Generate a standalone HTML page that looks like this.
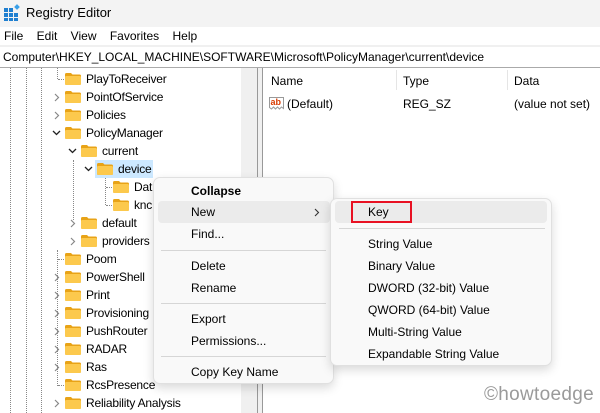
<!DOCTYPE html>
<html><head><meta charset="utf-8"><style>
*{margin:0;padding:0;box-sizing:border-box}
body{width:600px;height:413px;overflow:hidden;background:#fff;font-family:"Liberation Sans",sans-serif;font-size:12px;color:#000;position:relative}
.a{position:absolute;white-space:nowrap}
.t{position:absolute;white-space:nowrap;line-height:18px;height:18px;letter-spacing:-0.2px}
.f{position:absolute;width:16px;height:12px}
.dv{position:absolute;width:0;border-left:1px dotted #888}
.dh{position:absolute;height:0;border-top:1px dotted #888}
.mi{position:absolute;left:37px;line-height:22px;height:22px;font-size:12px}
.sep{position:absolute;height:1px;background:#d6d6d6}
</style></head><body>
<div class="a" style="left:0;top:0;width:600px;height:27px;background:#f3f3f3"></div>
<svg class="a" style="left:4px;top:4px" width="17" height="17" viewBox="0 0 17 17">
<g fill="#1f7fd0"><rect x="0" y="4" width="4" height="4"/><rect x="5" y="4" width="4" height="4"/><rect x="0" y="9" width="4" height="4"/><rect x="5" y="9" width="4" height="4"/><rect x="10" y="9" width="4" height="4"/><rect x="0" y="14" width="4" height="3"/><rect x="5" y="14" width="4" height="3"/><rect x="10" y="14" width="4" height="3"/></g>
<rect x="11" y="1" width="4" height="4" fill="#3aa0e8" transform="rotate(45 13 3)"/></svg>
<div class="a" style="left:26px;top:5px;font-size:13px">Registry Editor</div>
<div class="a" style="left:0;top:27px;width:600px;height:18px;background:#fff"></div>
<div class="a" style="left:4px;top:29px;font-size:12px">File&nbsp;&nbsp;&nbsp;&nbsp;Edit&nbsp;&nbsp;&nbsp;&nbsp;View&nbsp;&nbsp;&nbsp;&nbsp;Favorites&nbsp;&nbsp;&nbsp;&nbsp;Help</div>
<div class="a" style="left:0;top:45px;width:600px;height:2px;background:#f0f0f0"></div>
<div class="a" style="left:3px;top:50px;font-size:12px">Computer\HKEY_LOCAL_MACHINE\SOFTWARE\Microsoft\PolicyManager\current\device</div>
<div class="a" style="left:0;top:67px;width:600px;height:1px;background:#aaa"></div>
<div class="a" style="left:241px;top:68px;width:16px;height:345px;background:#f0f0f0"></div>
<div class="a" style="left:257px;top:68px;width:1px;height:345px;background:#999"></div>
<div class="a" style="left:258px;top:68px;width:4px;height:345px;background:#f0f0f0"></div>
<div class="a" style="left:262px;top:68px;width:1px;height:345px;background:#999"></div>
<div class="dv" style="left:10px;top:68px;height:345px"></div>
<div class="dv" style="left:26px;top:68px;height:345px"></div>
<div class="dv" style="left:41px;top:68px;height:345px"></div>
<div class="dv" style="left:57px;top:68px;height:11px"></div>
<div class="dv" style="left:57px;top:250px;height:136px"></div>
<div class="dh" style="left:58px;top:79px;width:6px"></div>
<div class="dh" style="left:58px;top:259px;width:6px"></div>
<div class="dh" style="left:58px;top:385px;width:6px"></div>
<div class="dv" style="left:73px;top:160px;height:60px"></div>
<div class="dv" style="left:105px;top:178px;height:27px"></div>
<div class="dh" style="left:106px;top:187px;width:6px"></div>
<div class="dh" style="left:106px;top:205px;width:6px"></div>
<div class="a" style="left:95px;top:160px;width:58px;height:18px;background:#cce8ff"></div>
<div id="tree"></div>
<div class="a" style="left:271px;top:74px">Name</div>
<div class="a" style="left:396px;top:70px;width:1px;height:20px;background:#e5e5e5"></div>
<div class="a" style="left:403px;top:74px">Type</div>
<div class="a" style="left:507px;top:70px;width:1px;height:20px;background:#e5e5e5"></div>
<div class="a" style="left:514px;top:74px">Data</div>
<svg class="a" style="left:269px;top:95px" width="16" height="16" viewBox="0 0 16 16"><path d="M0.5 2.5h14v11l-2-1.5-2 2-2-2-2 2-2-2-2 2-2-1.5z" fill="#fff" stroke="#999"/><text x="1.5" y="10" font-size="9" font-weight="bold" fill="#d83b01" font-family="Liberation Sans">ab</text></svg>
<div class="a" style="left:287px;top:97px">(Default)</div>
<div class="a" style="left:403px;top:97px">REG_SZ</div>
<div class="a" style="left:514px;top:97px">(value not set)</div>
<div class="a" style="left:484px;top:384px;font-size:19px;color:#9a9a9a;letter-spacing:0.3px">©howtoedge</div>
<div class="a" style="left:153px;top:177px;width:181px;height:207px;background:#f9f9f9;border:1px solid #e0e0e0;border-radius:7px;box-shadow:0 4px 10px rgba(0,0,0,0.15)">
<div class="a" style="left:4px;top:23px;width:172px;height:22px;background:#ebebeb;border-radius:4px"></div>
<div class="mi" style="top:2px;font-weight:bold">Collapse</div>
<div class="mi" style="top:23px">New</div>
<svg class="a" style="left:160px;top:30px" width="6" height="9"><path d="M1 1l3.5 3.5L1 8" stroke="#333" fill="none" stroke-width="1.1"/></svg>
<div class="mi" style="top:45px">Find...</div>
<div class="sep" style="left:7px;top:72px;width:165px"></div>
<div class="mi" style="top:77px">Delete</div>
<div class="mi" style="top:99px">Rename</div>
<div class="sep" style="left:7px;top:125px;width:165px"></div>
<div class="mi" style="top:130px">Export</div>
<div class="mi" style="top:152px">Permissions...</div>
<div class="sep" style="left:7px;top:178px;width:165px"></div>
<div class="mi" style="top:183px">Copy Key Name</div>
</div>
<div class="a" style="left:330px;top:198px;width:222px;height:168px;background:#f9f9f9;border:1px solid #e0e0e0;border-radius:7px;box-shadow:0 4px 10px rgba(0,0,0,0.15)">
<div class="a" style="left:4px;top:2px;width:212px;height:22px;background:#ebebeb;border-radius:4px"></div>
<div class="a" style="left:20px;top:2px;width:61px;height:22px;border:2px solid #e81123"></div>
<div class="mi" style="top:2px">Key</div>
<div class="sep" style="left:8px;top:29px;width:206px"></div>
<div class="mi" style="top:34px">String Value</div>
<div class="mi" style="top:56px">Binary Value</div>
<div class="mi" style="top:78px">DWORD (32-bit) Value</div>
<div class="mi" style="top:100px">QWORD (64-bit) Value</div>
<div class="mi" style="top:122px">Multi-String Value</div>
<div class="mi" style="top:144px">Expandable String Value</div>
</div>
<script>
var rows=[["PlayToReceiver",0,""],["PointOfService",0,">"],["Policies",0,">"],["PolicyManager",0,"v"],["current",1,"v"],["device",2,"v"],["Dat",3,""],["knc",3,""],["default",1,">"],["providers",1,">"],["Poom",0,""],["PowerShell",0,">"],["Print",0,">"],["Provisioning",0,">"],["PushRouter",0,">"],["RADAR",0,">"],["Ras",0,">"],["RcsPresence",0,""],["Reliability Analysis",0,">"]];
var h="";
rows.forEach(function(r,i){var y=70+i*18;var fx=65+r[1]*16;
h+='<svg class="f" style="left:'+fx+'px;top:'+(y+3)+'px" viewBox="0 0 16 12"><path d="M0 1.5Q0 0 1.5 0H6l1.5 1.5H14.5Q16 1.5 16 3V10.5Q16 12 14.5 12H1.5Q0 12 0 10.5z" fill="#e8a317"/><path d="M0 4Q0 3 1.5 3H14.5Q16 3 16 4.5V10.5Q16 12 14.5 12H1.5Q0 12 0 10.5z" fill="#fcc94d"/></svg>';
if(r[2]==">")h+='<svg class="a" style="left:'+(fx-11)+'px;top:'+(y+5)+'px" width="6" height="9"><path d="M1 1l3.5 3.5L1 8" stroke="#888" fill="none" stroke-width="1.2"/></svg>';
if(r[2]=="v")h+='<svg class="a" style="left:'+(fx-13)+'px;top:'+(y+6)+'px" width="9" height="6"><path d="M1 1l3.5 3.5L8 1" stroke="#222" fill="none" stroke-width="1.3"/></svg>';
h+='<div class="t" style="left:'+(fx+21)+'px;top:'+y+'px">'+r[0]+'</div>';});
document.getElementById("tree").innerHTML=h;
</script>
</body></html>
